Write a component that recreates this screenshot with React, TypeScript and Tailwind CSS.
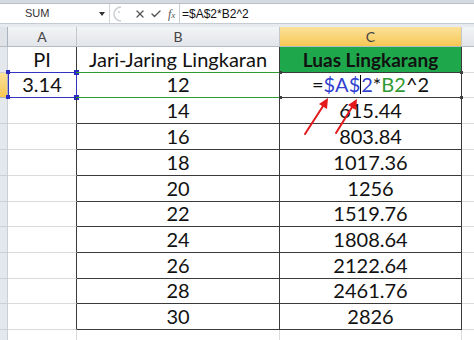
import { Check, X } from 'lucide-react';

type Row = { a: string; b: string; c: string; h: string };

const rows: Row[] = [
  { a: 'PI', b: 'Jari-Jaring Lingkaran', c: 'Luas Lingkarang', h: 'h-[26px]' },
  { a: '3.14', b: '12', c: '', h: 'h-[25px]' },
  { a: '', b: '14', c: '615.44', h: 'h-[26px]' },
  { a: '', b: '16', c: '803.84', h: 'h-[26px]' },
  { a: '', b: '18', c: '1017.36', h: 'h-[26px]' },
  { a: '', b: '20', c: '1256', h: 'h-[26px]' },
  { a: '', b: '22', c: '1519.76', h: 'h-[25px]' },
  { a: '', b: '24', c: '1808.64', h: 'h-[26px]' },
  { a: '', b: '26', c: '2122.64', h: 'h-[26px]' },
  { a: '', b: '28', c: '2461.76', h: 'h-[25px]' },
  { a: '', b: '30', c: '2826', h: 'h-[26px]' },
];

function Formula() {
  return (
    <span className="inline-flex items-center">
      <span>=</span>
      <span className="text-[#2f3fd0]">$A$</span>
      <span className="inline-block w-px h-[19px] bg-black" />
      <span className="text-[#2f3fd0]">2</span>
      <span>*</span>
      <span className="text-[#2e9a32]">B2</span>
      <span>^2</span>
    </span>
  );
}

function Arrows() {
  return (
    <svg className="absolute inset-0 pointer-events-none" width="474" height="340">
      <g stroke="#e3191c" strokeWidth="2" strokeLinecap="round">
        <line x1="305" y1="134" x2="325" y2="103" />
        <line x1="336" y1="133" x2="354" y2="104" />
      </g>
      <g fill="#e3191c">
        <polygon points="328,98 327,109 319,104" />
        <polygon points="357,99 356,110 348,105" />
      </g>
    </svg>
  );
}

export default function App() {
  return (
    <div className="relative w-[474px] h-[340px] overflow-hidden bg-white font-[family-name:Lato,sans-serif] text-[#111]">
      {/* ribbon edge */}
      <div className="h-[4px] bg-[#d5dae1] border-b border-[#b8c0ca]" />

      {/* formula bar */}
      <div className="flex h-[19px] bg-white">
        <div className="w-[110px] flex items-center border-r border-[#d0d5dc]">
          <span className="ml-[25px] text-[11px] font-[family-name:'Liberation_Sans',sans-serif] text-[#333]">SUM</span>
          <span className="ml-auto mr-[4px] w-0 h-0 border-l-[3px] border-r-[3px] border-t-[4px] border-l-transparent border-r-transparent border-t-[#333]" />
        </div>
        <div className="w-[70px] flex items-center border-r border-[#c8cdd4]">
          <svg width="14" height="16" className="ml-[2px]" viewBox="0 0 14 16">
            <path d="M9 1 A7 7 0 0 0 9 15" fill="none" stroke="#c9ced5" strokeWidth="1.5" />
            <path d="M6 6 l2 0" stroke="#c9ced5" strokeWidth="1.5" />
          </svg>
          <X className="ml-[8px] text-[#555]" size={12} strokeWidth={2.6} />
          <Check className="ml-[4px] text-[#555]" size={12} strokeWidth={2.8} />
          <span className="ml-[6px] text-[12px] italic font-[family-name:'Liberation_Serif',serif] text-[#555] leading-none">
            f<span className="text-[9px]">x</span>
          </span>
        </div>
        <div className="flex-1 flex items-center pl-[2px] text-[12px] font-[family-name:'Liberation_Sans',sans-serif] text-[#111]">
          =$A$2*B2^2
        </div>
      </div>
      <div className="h-[4px] bg-[#e7eaee] border-t border-[#c5cbd3]" />

      {/* column headers */}
      <div className="flex h-[20px] text-[14px] text-[#444] border-b border-[#b5bcc6]">
        <div className="w-[8px] bg-[#dfe3e8] border-r border-[#aab2bd]" />
        <div className="w-[69px] flex items-center justify-center bg-gradient-to-b from-[#f3f4f6] to-[#e2e5e9] border-r border-[#c3c8cf]">A</div>
        <div className="w-[203px] flex items-center justify-center bg-gradient-to-b from-[#f3f4f6] to-[#e2e5e9] border-r border-[#c3c8cf]">B</div>
        <div className="w-[182px] flex items-center justify-center bg-gradient-to-b from-[#fbe19a] to-[#f6c74f] border-r border-[#c3c8cf]">C</div>
        <div className="flex-1 bg-gradient-to-b from-[#f3f4f6] to-[#e2e5e9]" />
      </div>

      {/* sheet rows */}
      {rows.map((r, i) => (
        <div key={i} className={`flex ${r.h} text-[20px] leading-none`}>
          <div
            className={
              i === 1
                ? 'w-[8px] bg-gradient-to-b from-[#fbe19a] to-[#f6c74f] border-r border-b border-[#aab2bd]'
                : 'w-[8px] bg-[#e4e8ed] border-r border-b border-[#c9cfd7]'
            }
          />
          <div className="relative w-[69px] flex items-end justify-center pb-[3px] border-r border-b border-r-[#3a3a3a] border-b-[#dadada]">
            {r.a}
            {i === 1 && (
              <>
                <div className="absolute left-0 -top-px w-[69px] h-[26px] border border-[#3434c4]" />
                <div className="absolute -left-[2px] -top-[3px] w-[4px] h-[4px] bg-[#2a2ac0]" />
                <div className="absolute -right-[3px] -top-[3px] w-[5px] h-[5px] bg-[#2a2ac0]" />
                <div className="absolute -left-[2px] -bottom-[2px] w-[4px] h-[4px] bg-[#2a2ac0]" />
                <div className="absolute -right-[3px] -bottom-[3px] w-[5px] h-[5px] bg-[#2a2ac0]" />
              </>
            )}
          </div>
          <div className="relative w-[203px] flex items-end justify-center pb-[3px] border-r border-b border-[#3a3a3a]">
            {r.b}
            {i === 1 && <div className="absolute -left-px -top-px w-[203px] h-[26px] border-t border-b border-[#2e9a32]" />}
          </div>
          <div
            className={
              i === 0
                ? 'w-[182px] flex items-end justify-center pb-[3px] bg-[#1fa84b] text-[19px] font-bold border-r border-b border-[#3a3a3a]'
                : 'relative w-[182px] flex items-end justify-center pb-[3px] border-r border-b border-[#3a3a3a]'
            }
          >
            {i === 1 ? <Formula /> : r.c}
            {i === 1 && (
              <>
                <div className="absolute -left-px -top-[2px] w-[3px] h-[3px] bg-[#404040]" />
                <div className="absolute -right-[2px] -top-[2px] w-[3px] h-[3px] bg-[#404040]" />
                <div className="absolute -left-px -bottom-[2px] w-[3px] h-[3px] bg-[#404040]" />
                <div className="absolute -right-[2px] -bottom-[2px] w-[3px] h-[3px] bg-[#404040]" />
              </>
            )}
          </div>
          <div className="flex-1 border-b border-[#dadada]" />
        </div>
      ))}

      {/* trailing empty row */}
      <div className="flex h-[10px]">
        <div className="w-[8px] bg-[#e4e8ed] border-r border-[#c9cfd7]" />
        <div className="w-[69px] border-r border-[#dadada]" />
        <div className="w-[203px] border-r border-[#dadada]" />
        <div className="w-[182px] border-r border-[#dadada]" />
        <div className="flex-1" />
      </div>

      <Arrows />
    </div>
  );
}
